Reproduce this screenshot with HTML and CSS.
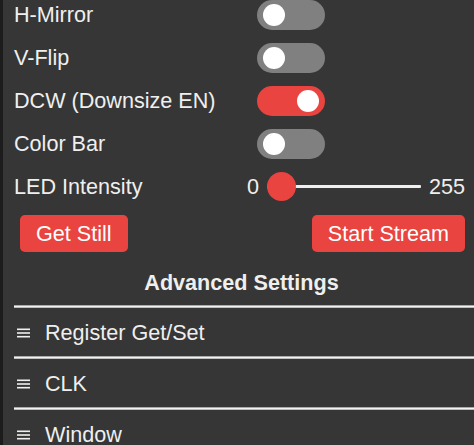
FILE: index.html
```html
<!DOCTYPE html>
<html>
<head>
<meta charset="utf-8">
<link rel="stylesheet" href="styles.css">
</head>
<body>
<div class="panel">
  <div class="row"><span class="label">H-Mirror</span><span class="switch"><span class="knob"></span></span></div>
  <div class="row"><span class="label">V-Flip</span><span class="switch"><span class="knob"></span></span></div>
  <div class="row"><span class="label">DCW (Downsize EN)</span><span class="switch on"><span class="knob"></span></span></div>
  <div class="row"><span class="label">Color Bar</span><span class="switch"><span class="knob"></span></span></div>
  <div class="row spread"><span class="label">LED Intensity</span>
    <span class="range-group"><span class="rv">0</span><input class="range" type="range" min="0" max="255" value="0"><span class="rv">255</span></span>
  </div>
  <div class="buttons"><button class="btn">Get Still</button><button class="btn">Start Stream</button></div>
  <div class="heading">Advanced Settings</div>
  <div class="menu">
    <div class="item"><svg class="ham" width="13" height="10" viewBox="0 0 13 10"><rect x="0" y="0.5" width="13" height="1.6" fill="#efefef"/><rect x="0" y="4.2" width="13" height="1.6" fill="#efefef"/><rect x="0" y="7.9" width="13" height="1.6" fill="#efefef"/></svg><span>Register Get/Set</span></div>
    <div class="item"><svg class="ham" width="13" height="10" viewBox="0 0 13 10"><rect x="0" y="0.5" width="13" height="1.6" fill="#efefef"/><rect x="0" y="4.2" width="13" height="1.6" fill="#efefef"/><rect x="0" y="7.9" width="13" height="1.6" fill="#efefef"/></svg><span>CLK</span></div>
    <div class="item"><svg class="ham" width="13" height="10" viewBox="0 0 13 10"><rect x="0" y="0.5" width="13" height="1.6" fill="#efefef"/><rect x="0" y="4.2" width="13" height="1.6" fill="#efefef"/><rect x="0" y="7.9" width="13" height="1.6" fill="#efefef"/></svg><span>Window</span></div>
  </div>
</div>
</body>
</html>
```
FILE: styles.css
```css
html, body {
  margin: 0;
  padding: 0;
  background: #1c1c1c;
  overflow: hidden;
}
body {
  font-family: "Liberation Sans", Arial, sans-serif;
  font-size: 21.6px;
  color: #efefef;
}
.panel {
  margin-left: 3px;
  margin-top: -7px;
  background: #363636;
  padding: 0 9px 60px 11px;
  min-height: 500px;
}
.row {
  height: 43px;
  display: grid;
  grid-template-columns: 243px auto;
  align-items: center;
  justify-content: start;
}
.row.spread {
  display: flex;
  justify-content: space-between;
}
.switch {
  position: relative;
  display: block;
  width: 68px;
  height: 30px;
  border-radius: 15px;
  background: #808080;
}
.switch.on {
  background: #e9443f;
}
.knob {
  position: absolute;
  top: 4px;
  left: 6px;
  width: 22px;
  height: 22px;
  border-radius: 50%;
  background: #fff;
}
.switch.on .knob {
  left: 40px;
}
.range-group {
  display: flex;
  align-items: center;
  gap: 8px;
}
.range {
  -webkit-appearance: none;
  appearance: none;
  width: 154px;
  height: 29px;
  margin: 0;
  background: transparent;
}
.range::-webkit-slider-runnable-track {
  height: 3px;
  background: #efefef;
  border-radius: 1px;
}
.range::-webkit-slider-thumb {
  -webkit-appearance: none;
  width: 29px;
  height: 29px;
  border-radius: 50%;
  background: #e9443f;
  margin-top: -13px;
  border: none;
}
.buttons {
  margin-top: 7px;
  display: flex;
  justify-content: space-between;
  padding-left: 6px;
}
.btn {
  height: 37px;
  padding: 0 16px;
  border: none;
  border-radius: 5px;
  background: #e9443f;
  color: #fff;
  font-family: "Liberation Sans", Arial, sans-serif;
  font-size: 21.6px;
  line-height: 37px;
}
.heading {
  margin-top: 18px;
  line-height: 26px;
  font-weight: bold;
  text-align: center;
  padding-left: 4px;
}
.menu {
  margin-top: 9px;
  margin-right: -9px;
}
.item {
  box-sizing: border-box;
  border-top: 1px solid #aaa;
  box-shadow: inset 0 1px 0 #f2f2f2, inset 0 2px 0 #bdbdbd;
  height: 51px;
  padding-top: 3px;
  display: flex;
  align-items: center;
  gap: 15px;
  padding-left: 3px;
}
.ham {
  display: block;
  flex: none;
}
```
